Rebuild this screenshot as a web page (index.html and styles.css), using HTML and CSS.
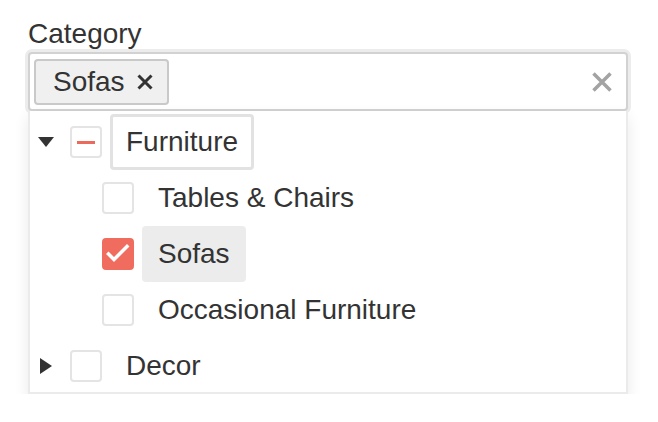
FILE: index.html
```html
<!DOCTYPE html>
<html lang="en">
<head>
<meta charset="utf-8">
<title>Category</title>
<link rel="stylesheet" href="styles.css">
</head>
<body>
<div class="field">
  <label class="field-label">Category</label>
  <div class="control">
    <span class="tag">
      <span class="tag-text">Sofas</span>
      <svg class="tag-x" width="16" height="16" viewBox="0 0 16 16"><path d="M1.5 1.5 L14.5 14.5 M14.5 1.5 L1.5 14.5" /></svg>
    </span>
    <span class="spacer"></span>
    <svg class="clear" width="20" height="20" viewBox="0 0 20 20"><path d="M1.5 1.5 L18.5 18.5 M18.5 1.5 L1.5 18.5" /></svg>
  </div>
  <div class="menu">
    <div class="row">
      <span class="caret"><svg width="16" height="10" viewBox="0 0 16 10"><polygon points="0,0 16,0 8,10" /></svg></span>
      <span class="cb partial"><span class="minus"></span></span>
      <span class="opt focused">Furniture</span>
    </div>
    <div class="row child">
      <span class="caret"></span>
      <span class="cb"></span>
      <span class="opt">Tables &amp; Chairs</span>
    </div>
    <div class="row child">
      <span class="caret"></span>
      <span class="cb checked"><svg width="32" height="32" viewBox="0 0 32 32"><path d="M6.5 16 L12 21.5 L25 8.5" /></svg></span>
      <span class="opt active">Sofas</span>
    </div>
    <div class="row child">
      <span class="caret"></span>
      <span class="cb"></span>
      <span class="opt">Occasional Furniture</span>
    </div>
    <div class="row">
      <span class="caret"><svg width="12" height="16" viewBox="0 0 12 16"><polygon points="0,0 12,8 0,16" /></svg></span>
      <span class="cb"></span>
      <span class="opt">Decor</span>
    </div>
  </div>
</div>
</body>
</html>
```

FILE: styles.css
```css
html, body {
  margin: 0;
  padding: 0;
  background: #ffffff;
}

body {
  font-family: "Liberation Sans", Arial, Helvetica, sans-serif;
  font-size: 28px;
  color: #333333;
}

.field {
  width: 600px;
  padding: 18px 0 0 28px;
}

.field-label {
  display: block;
  height: 32px;
  line-height: 32px;
  margin-bottom: 2px;
}

.control {
  box-sizing: border-box;
  height: 59px;
  display: flex;
  align-items: center;
  padding: 0 4px;
  border: 2px solid #d2d2d2;
  border-radius: 4px;
  box-shadow: 0 0 0 3px #ececec;
  background: #ffffff;
}

.tag {
  box-sizing: border-box;
  height: 46px;
  display: inline-flex;
  align-items: center;
  gap: 12px;
  padding: 0 14px 0 17px;
  background: #f0f0f0;
  border: 2px solid #c9c9c9;
  border-radius: 4px;
  line-height: 42px;
}

.tag-x path {
  stroke: #333333;
  stroke-width: 3;
  fill: none;
}

.spacer {
  flex: 1;
}

.clear {
  margin-right: 10px;
}

.clear path {
  stroke: #a3a3a3;
  stroke-width: 3.5;
  fill: none;
}

.menu {
  box-sizing: border-box;
  border: 2px solid #ebebeb;
  border-top: 0;
  padding: 3px 0 0 0;
  height: 283px;
  box-shadow: 0 6px 14px rgba(0, 0, 0, 0.09);
  background: #ffffff;
}

.row {
  height: 56px;
  display: flex;
  align-items: center;
  gap: 8px;
}

.row.child {
  padding-left: 32px;
}

.caret {
  width: 32px;
  height: 56px;
  display: flex;
  align-items: center;
  justify-content: center;
}

.caret polygon {
  fill: #333333;
}

.cb {
  box-sizing: border-box;
  width: 32px;
  height: 32px;
  border: 2px solid #e4e4e4;
  border-radius: 4px;
  display: flex;
  align-items: center;
  justify-content: center;
  background: #ffffff;
}

.cb.checked {
  background: #ef6c5e;
  border-color: #ef6c5e;
}

.cb.checked svg {
  flex: none;
}

.cb.checked path {
  stroke: #ffffff;
  stroke-width: 3.5;
  fill: none;
  stroke-linecap: square;
}

.minus {
  width: 18px;
  height: 3px;
  background: #ec6a5c;
}

.opt {
  box-sizing: border-box;
  height: 56px;
  line-height: 50px;
  padding: 0 13px;
  border: 3px solid transparent;
  border-radius: 4px;
  white-space: nowrap;
}

.opt.focused {
  border-color: #e2e2e2;
}

.opt.active {
  background: #ececec;
}
```
